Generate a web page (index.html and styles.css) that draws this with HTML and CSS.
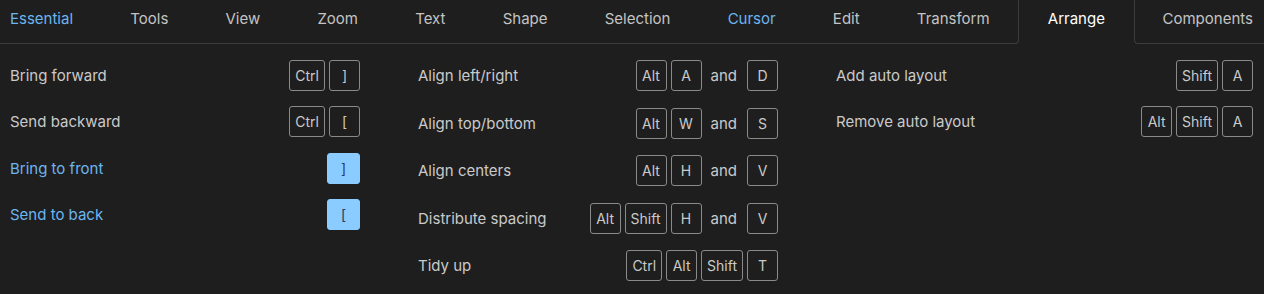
FILE: index.html
```html
<!DOCTYPE html>
<html lang="en">
<head>
  <meta charset="UTF-8" />
  <title>Shortcuts</title>
  <link rel="stylesheet" href="styles.css">
</head>
<body>
  <nav class="tabs">
    <div class="tab link">Essential</div>
    <div class="tab">Tools</div>
    <div class="tab">View</div>
    <div class="tab">Zoom</div>
    <div class="tab">Text</div>
    <div class="tab">Shape</div>
    <div class="tab">Selection</div>
    <div class="tab link">Cursor</div>
    <div class="tab">Edit</div>
    <div class="tab before-active">Transform</div>
    <div class="tab active">Arrange</div>
    <div class="tab after-active">Components</div>
  </nav>

  <div class="panel">
    <div class="col">
      <div class="row">
        <span class="label">Bring forward</span>
        <span class="keys"><kbd>Ctrl</kbd><kbd>]</kbd></span>
      </div>
      <div class="row">
        <span class="label">Send backward</span>
        <span class="keys"><kbd>Ctrl</kbd><kbd>[</kbd></span>
      </div>
      <div class="row hl">
        <span class="label">Bring to front</span>
        <span class="keys"><kbd class="on">]</kbd></span>
      </div>
      <div class="row hl">
        <span class="label">Send to back</span>
        <span class="keys"><kbd class="on">[</kbd></span>
      </div>
    </div>

    <div class="col wide">
      <div class="row">
        <span class="label">Align left/right</span>
        <span class="keys"><kbd>Alt</kbd><kbd>A</kbd><span class="and">and</span><kbd>D</kbd></span>
      </div>
      <div class="row">
        <span class="label">Align top/bottom</span>
        <span class="keys"><kbd>Alt</kbd><kbd>W</kbd><span class="and">and</span><kbd>S</kbd></span>
      </div>
      <div class="row">
        <span class="label">Align centers</span>
        <span class="keys"><kbd>Alt</kbd><kbd>H</kbd><span class="and">and</span><kbd>V</kbd></span>
      </div>
      <div class="row">
        <span class="label">Distribute spacing</span>
        <span class="keys"><kbd>Alt</kbd><kbd>Shift</kbd><kbd>H</kbd><span class="and">and</span><kbd>V</kbd></span>
      </div>
      <div class="row">
        <span class="label">Tidy up</span>
        <span class="keys"><kbd>Ctrl</kbd><kbd>Alt</kbd><kbd>Shift</kbd><kbd>T</kbd></span>
      </div>
    </div>

    <div class="col">
      <div class="row">
        <span class="label">Add auto layout</span>
        <span class="keys"><kbd>Shift</kbd><kbd>A</kbd></span>
      </div>
      <div class="row">
        <span class="label">Remove auto layout</span>
        <span class="keys"><kbd>Alt</kbd><kbd>Shift</kbd><kbd>A</kbd></span>
      </div>
    </div>
  </div>
</body>
</html>
```

FILE: styles.css
```css
* {
  box-sizing: border-box;
}

body {
  margin: 0;
  overflow: hidden;
  background: #1e1e1e;
  color: #cacaca;
  font-family: Inter, "Noto Sans", sans-serif;
  font-size: 15px;
}

/* tab strip, scrolled a little to the left */
.tabs {
  display: flex;
  margin-left: -18.6px;
  white-space: nowrap;
}

.tab {
  height: 44px;
  padding: 9px 28.6px 0;
  line-height: 20px;
  border-bottom: 1px solid #3c3c3c;
  color: #c4c4c4;
}

.tab.link { color: #6cb6f0; }

.tab.active {
  color: #fff;
  border-bottom-color: transparent;
}

.tab.before-active {
  border-right: 1px solid #3c3c3c;
  border-bottom-right-radius: 4px;
}

.tab.after-active {
  border-left: 1px solid #3c3c3c;
  border-bottom-left-radius: 4px;
  padding-left: 28px;
}

.panel {
  display: grid;
  grid-template-columns: 350px 360px 1fr;
  column-gap: 58px;
  padding: 16px 11px 0 10px;
}

.col {
  display: flex;
  flex-direction: column;
  gap: 15.3px;
}

.col.wide { gap: 16.5px; }

.row {
  display: flex;
  align-items: center;
  justify-content: space-between;
  height: 31px;
}

.row.hl .label { color: #6cb6f0; }

.keys {
  display: flex;
  align-items: center;
  gap: 4px;
}

kbd {
  display: inline-flex;
  align-items: center;
  justify-content: center;
  height: 31px;
  min-width: 31px;
  padding: 0 5px;
  border: 1px solid #8a8a8a;
  border-radius: 3px;
  font-family: inherit;
  font-size: 14px;
  color: #cacaca;
}

kbd.on {
  width: 33px;
  background: #8accff;
  border-color: #8accff;
  color: #2a3a5a;
}

.and {
  margin: 0 6px 0 5px;
}
```
